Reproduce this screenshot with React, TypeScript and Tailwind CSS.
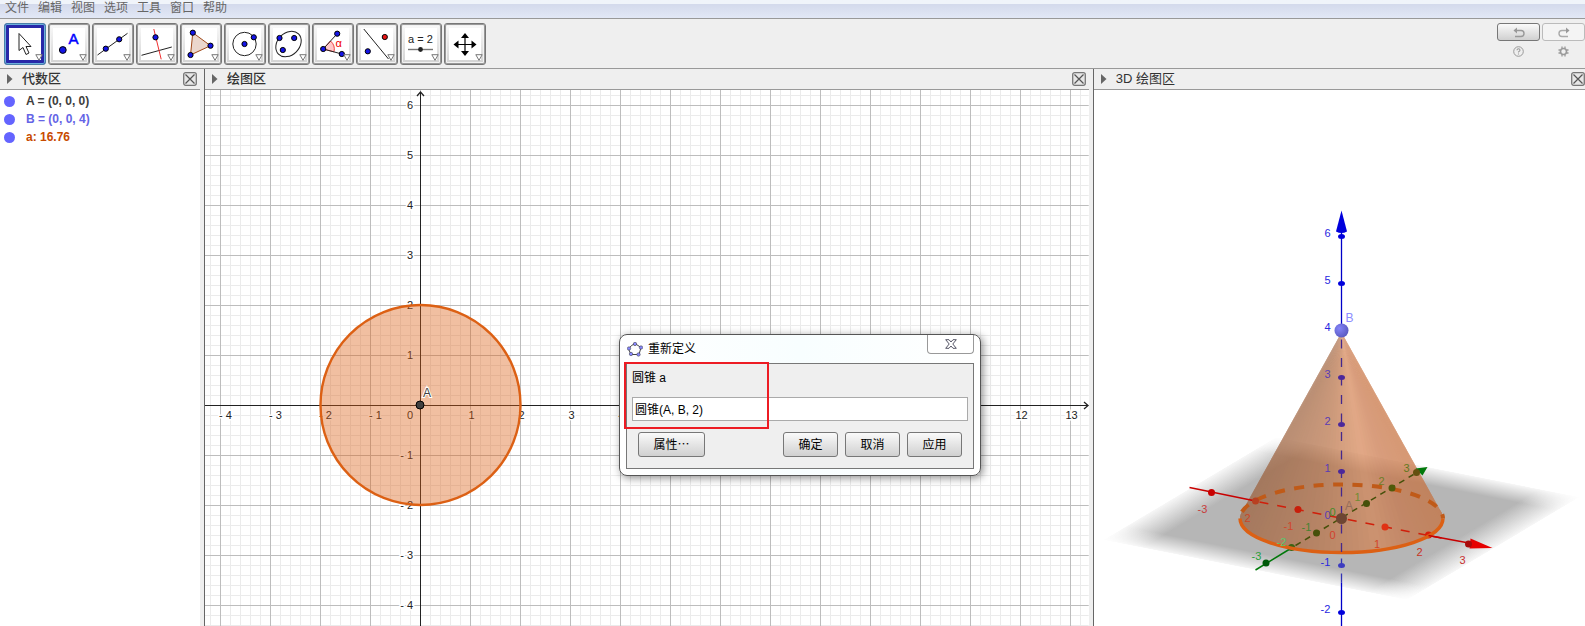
import type { ReactNode } from "react";
import clsx from "clsx";

const menus = ["文件", "编辑", "视图", "选项", "工具", "窗口", "帮助"];

const objects = [
  { text: "A = (0, 0, 0)", color: "text-[#404040]" },
  { text: "B = (0, 0, 4)", color: "text-[#6464e6]" },
  { text: "a: 16.76", color: "text-[#c84b00]" },
];

const Dot = ({ x, y, fill = "#1414e6", r = 2.6 }: { x: number; y: number; fill?: string; r?: number }) => (
  <circle cx={x} cy={y} r={r} fill={fill} stroke="#000" />
);

const tools: { name: string; icon: ReactNode }[] = [
  {
    name: "移动",
    icon: <path d="M9.5 4.5V21.5L13.5 18.5L16.5 25.5L19.5 24L16.5 17.5H21.5Z" fill="#fff" stroke="#222" />,
  },
  {
    name: "点",
    icon: (
      <>
        <Dot x={9.3} y={21} r={3.4} />
        <text x="15" y="15" fontSize="15" fill="#0000ff" stroke="#0000ff" strokeWidth="0.5">A</text>
      </>
    ),
  },
  {
    name: "直线",
    icon: (
      <>
        <path d="M0 26L30 4.3" stroke="#222" />
        <Dot x={8.3} y={19.7} />
        <Dot x={21.7} y={10.3} />
      </>
    ),
  },
  {
    name: "垂线",
    icon: (
      <>
        <path d="M0 26.3L30.3 18" stroke="#222" />
        <path d="M12.3 0L19.7 30.3" stroke="#f03030" />
        <Dot x={14} y={8.3} />
      </>
    ),
  },
  {
    name: "多边形",
    icon: (
      <>
        <path d="M7.3 3.7L25 16.7L5 26Z" fill="#ebd6cc" stroke="#a04818" />
        <Dot x={7.3} y={3.7} />
        <Dot x={25} y={16.7} />
        <Dot x={5} y={26} />
      </>
    ),
  },
  {
    name: "圆",
    icon: (
      <>
        <circle cx="15" cy="15" r="11.7" stroke="#222" />
        <Dot x={15} y={15} />
        <Dot x={24.3} y={8.3} />
      </>
    ),
  },
  {
    name: "椭圆",
    icon: (
      <>
        <ellipse cx="15" cy="15" rx="14.2" ry="11" transform="rotate(-45 15 15)" stroke="#222" />
        <Dot x={6} y={9} />
        <Dot x={20.7} y={9} />
        <Dot x={9.3} y={21} />
      </>
    ),
  },
  {
    name: "角度",
    icon: (
      <>
        <path d="M5.7 20L13 12A11 11 0 0 1 16.5 22.8Z" fill="#ffc8c8" stroke="#f04040" />
        <path d="M19.7 4.7L5.7 20L24.3 25" stroke="#222" />
        <text x="18" y="18" fontSize="11" fill="#f00000">α</text>
        <Dot x={5.7} y={20} />
        <Dot x={19.7} y={4.7} />
        <Dot x={24.3} y={25} />
      </>
    ),
  },
  {
    name: "轴对称",
    icon: (
      <>
        <path d="M2.3 0L27 30" stroke="#222" />
        <Dot x={23.3} y={8} fill="#e61414" />
        <Dot x={6.3} y={22.3} />
      </>
    ),
  },
  {
    name: "滑动条",
    icon: (
      <>
        <text x="15" y="14" fontSize="11" fill="#222" textAnchor="middle">a = 2</text>
        <path d="M2.5 20.5H27.5" stroke="#777" strokeWidth="1.4" />
        <circle cx="15" cy="20.5" r="2.4" fill="#222" />
      </>
    ),
  },
  {
    name: "移动视图",
    icon: (
      <>
        <path d="M15.5 6V25M6 15.5H25" stroke="#000" strokeWidth="1.2" />
        <path
          d="M15.5 4L19.5 9H11.5ZM15.5 27L19.5 22H11.5ZM4 15.5L9 11.5V19.5ZM27 15.5L22 11.5V19.5Z"
          fill="#000"
        />
      </>
    ),
  },
];

const range = (from: number, to: number) => Array.from({ length: to - from + 1 }, (_, i) => from + i);

const label = (n: number) => (n < 0 ? `- ${-n}` : `${n}`);

const PanelHeader = ({ title, light, flush }: { title: string; light?: boolean; flush?: boolean }) => (
  <header
    className={clsx(
      "flex h-[21px] shrink-0 items-center border-b border-[#999] bg-[#efefef] pl-[7px] text-[#333]",
      flush ? "pr-0" : "pr-[3px]"
    )}
  >
    <svg width="6" height="10" viewBox="0 0 6 10" aria-hidden="true">
      <path d="M0 0L5.5 5L0 10Z" fill="#666" />
    </svg>
    <h2 className={clsx("ml-[9px] flex-1 text-[13px] leading-5", light ? "font-normal" : "font-medium")}>{title}</h2>
    <button aria-label="关闭">
      <svg width="14" height="14" viewBox="0 0 14 14" fill="none">
        <rect x="0.7" y="0.7" width="12.6" height="12.6" rx="2" fill="#e6e6e6" stroke="#777" strokeWidth="1.3" />
        <path d="M2.5 2.5L11.5 11.5M11.5 2.5L2.5 11.5" stroke="#555" strokeWidth="1.2" />
      </svg>
    </button>
  </header>
);

const Toolbar = () => (
  <div className="flex h-[50px] shrink-0 items-start justify-between border-b border-[#999] bg-[#efefef] pl-1 pt-1">
    <div className="flex gap-[2px]">
      {tools.map((tool, i) => (
        <button
          key={tool.name}
          aria-label={tool.name}
          className={clsx(
            "relative flex size-[42px] items-center justify-center rounded-[3px] border",
            i === 0
              ? "border-[#4a7fa8] bg-[#2828a8] shadow-[inset_0_0_0_1px_#6cb0dc]"
              : "border-[#777] bg-linear-to-b from-[#fafafa] to-[#d2d2d2] shadow-[inset_0_0_0_1px_#999,inset_0_0_0_2px_#f2f2f2]"
          )}
        >
          <svg width="32" height="32" viewBox="-0.5 -1 32 32" fill="none" className="bg-white">
            {tool.icon}
          </svg>
          <svg width="8" height="7" viewBox="0 0 8 7" className="absolute bottom-[3px] right-[2px]">
            <path d="M0.8 0.7H7.2L4 6.3Z" fill="#fff" stroke="#777" />
          </svg>
        </button>
      ))}
    </div>
    <div className="grid grid-cols-2 gap-x-[2px] gap-y-[2px] text-[#999]">
      <button
        aria-label="撤销"
        className="flex h-[18px] w-[43px] items-center justify-center rounded-[3px] border border-[#777] bg-linear-to-b from-[#fafafa] to-[#d0d0d0]"
      >
        <svg width="12" height="11" viewBox="0 0 12 11" fill="none">
          <path d="M2 3.5H8A3 3 0 0 1 8 9.5H2" stroke="#999" strokeWidth="1.4" />
          <path d="M0.5 3.5L4 0.5V6.5Z" fill="#999" />
        </svg>
      </button>
      <button
        aria-label="重做"
        className="flex h-[18px] w-[43px] items-center justify-center rounded-[3px] border border-[#bbb] bg-[#f4f4f4]"
      >
        <svg width="12" height="11" viewBox="0 0 12 11" fill="none">
          <path d="M10 3.5H4A3 3 0 0 0 4 9.5H10" stroke="#aaa" strokeWidth="1.4" />
          <path d="M11.5 3.5L8 0.5V6.5Z" fill="#999" />
        </svg>
      </button>
      <button aria-label="帮助" className="flex h-4 items-center justify-center">
        <svg width="11" height="11" viewBox="0 0 11 11" fill="none">
          <circle cx="5.5" cy="5.5" r="4.8" stroke="#999" />
          <path d="M4 4.2Q4 2.7 5.5 2.7T7 4.2Q7 5 5.5 5.9V6.5M5.5 7.5V8.6" stroke="#999" strokeWidth="1.1" />
        </svg>
      </button>
      <button aria-label="设置" className="flex h-4 items-center justify-center">
        <svg width="11" height="11" viewBox="0 0 11 11" fill="none" stroke="#999">
          <circle cx="5.5" cy="5.5" r="3" strokeWidth="1.6" />
          <path
            d="M4 0.5V2.5M7 0.5V2.5M4 8.5V10.5M7 8.5V10.5M0.5 4H2.5M0.5 7H2.5M8.5 4H10.5M8.5 7H10.5"
            strokeWidth="1.3"
          />
        </svg>
      </button>
    </div>
  </div>
);

// 50px per unit, one minor line every 0.2
const Graph = () => (
  <svg className="min-w-0 flex-1 bg-white" fontSize="11" role="img" aria-label="绘图区">
    <defs>
      <pattern id="minor" width="10" height="10" patternUnits="userSpaceOnUse" x="215" y="315">
        <path d="M0.5 0V10M0 0.5H10" stroke="#ebebeb" fill="none" />
      </pattern>
      <pattern id="major" width="50" height="50" patternUnits="userSpaceOnUse" x="215" y="315">
        <path d="M0.5 0V50M0 0.5H50" stroke="#bdbdbd" fill="none" />
      </pattern>
    </defs>
    <rect width="100%" height="100%" fill="url(#minor)" />
    <rect width="100%" height="100%" fill="url(#major)" />
    <path d="M215.5 3V900M0 315.5H883" stroke="#222" />
    <path d="M212 6L215.5 2L219 6M879 312L883 315.5L879 319" stroke="#222" fill="none" strokeWidth="1.3" />
    <g fill="#222" stroke="#fff" strokeWidth="3" paintOrder="stroke">
      {range(-4, 13).filter((n) => n !== 0).map((n) => (
        <text key={n} x={215.5 + n * 50 + (n < 0 ? 5 : 1)} y="329" textAnchor="middle">{label(n)}</text>
      ))}
      {range(-4, 6).filter((n) => n !== 0).map((n) => (
        <text key={n} x="208" y={319 - n * 50} textAnchor="end">{label(n)}</text>
      ))}
      <text x="208" y="329" textAnchor="end">0</text>
    </g>
    <circle cx="215.5" cy="315" r="100" fill="#dc6014" fillOpacity="0.4" stroke="#dc6014" strokeWidth="2.4" />
    <circle cx="215" cy="315" r="4" fill="#404040" stroke="#000" />
    <text x="218" y="307" fontSize="12" fill="#404040" stroke="#fff" strokeWidth="2" paintOrder="stroke">A</text>
  </svg>
);

const RX = 101.5;
const RY = 34;
const APEX = -186;

// shade of the cone wall, t runs from the left edge (0) to the right edge (1)
const shades = [
  [0, 156, 95, 58],
  [0.4, 184, 112, 68],
  [0.66, 214, 132, 84],
  [0.8, 200, 116, 70],
  [1, 198, 110, 58],
];

const shade = (t: number) => {
  const i = Math.max(1, shades.findIndex((s) => s[0] >= t));
  const [a, b] = [shades[i - 1], shades[i]];
  const k = (t - a[0]) / (b[0] - a[0]);
  return `rgb(${[1, 2, 3].map((c) => Math.round(a[c] + (b[c] - a[c]) * k)).join(",")})`;
};

const FACETS = 60;

const rim = (i: number) => {
  const angle = Math.PI + 0.183 - (i / FACETS) * (Math.PI + 0.366);
  return `${(RX * Math.cos(angle)).toFixed(2)} ${(RY * Math.sin(angle)).toFixed(2)}`;
};

// each facet reaches under the next one so that no seam shows
const facets = range(0, FACETS - 1).map((i) => ({
  d: `M0 ${APEX}L${rim(i)}L${rim(Math.min(i + 2, FACETS))}Z`,
  fill: shade((1 - Math.cos((Math.PI * (i + 0.5)) / FACETS)) / 2),
}));

const redTicks = [
  [-130, -26, "#c80000"], [-86, -17.5, "#b84020"], [-43.5, -9, "#c81e0a"],
  [43.5, 8.5, "#e03214"], [87, 16.5, "#d81e0a"], [127, 25.5, "#a80a0a"],
] as const;

const greenTicks = [
  [-75.5, 44.5, "#005a0a"], [-50, 29, "#3c6414"], [-25, 14.5, "#46500a"],
  [25, -15, "#46500a"], [50.5, -30.5, "#505a0a"], [75, -46, "#64500f"],
] as const;

const marks = [
  [-139, -6, "-3", "#c83c3c"], [-94, 3, "2", "#c84628"], [-53, 11, "-1", "#d2462d"], [-9, 20, "0", "#d2412d"],
  [35.5, 29, "1", "#d24628"], [78, 37, "2", "#c8321e"], [121, 45, "3", "#c83232"],
  [-85, 41, "-3", "#28a03c"], [-60, 27, "-2", "#5ac86e"], [-35, 12, "-1", "#468232"], [-9, -3, "0", "#468c28"],
  [16, -18, "1", "#6e8c32"], [40, -34, "2", "#6e7d28"], [65, -47, "3", "#64781e"],
] as const;

const Scene = () => (
  <svg className="min-w-0 flex-1 bg-white" fontSize="11" textAnchor="middle" fill="none" role="img" aria-label="3D 绘图区">
    <defs>
      <linearGradient id="fadeU" x1="0" x2="1" y1="0" y2="0">
        <stop offset="0" stopColor="#b6b6b6" stopOpacity="0.1" />
        <stop offset="0.13" stopColor="#b6b6b6" />
        <stop offset="0.87" stopColor="#b6b6b6" />
        <stop offset="1" stopColor="#b6b6b6" stopOpacity="0.1" />
      </linearGradient>
      <linearGradient id="fadeV" x1="0" x2="0" y1="0" y2="1">
        <stop offset="0" stopColor="#fff" stopOpacity="0.1" />
        <stop offset="0.13" stopColor="#fff" />
        <stop offset="0.87" stopColor="#fff" />
        <stop offset="1" stopColor="#fff" stopOpacity="0.1" />
      </linearGradient>
      <mask id="fade" maskUnits="userSpaceOnUse" x="0" y="0" width="100" height="100">
        <rect width="100" height="100" fill="url(#fadeV)" />
      </mask>
      <radialGradient id="ball" cx="0.35" cy="0.35" r="0.7">
        <stop offset="0" stopColor="#8484f8" />
        <stop offset="1" stopColor="#5a5ac0" />
      </radialGradient>
    </defs>
    <g transform="translate(247.5 428.5)">
      <g transform="matrix(3.04 0.6 1.73 -1.03 -238.5 21.5)">
        <rect width="100" height="100" fill="url(#fadeU)" mask="url(#fade)" />
      </g>

      <g opacity="0.7">
        <ellipse rx={RX} ry={RY} fill="#c87646" />
        {facets.map((f) => (
          <path key={f.d} d={f.d} fill={f.fill} />
        ))}
      </g>
      <path d={`M${-RX} 0A${RX} ${RY} 0 0 1 ${RX} 0`} stroke="#c05a18" strokeWidth="4" strokeDasharray="10 9.5" strokeDashoffset="-7" />

      <path d="M-152 -31L-86 -17.5" stroke="#c80000" strokeWidth="1.5" />
      <path d="M-82 -16.5L87 17" stroke="#d01e0a" strokeWidth="1.5" strokeDasharray="9 9" />
      <path d="M87 17L130 25" stroke="#c80000" strokeWidth="1.5" />
      <path d="M129 20L151 29.5L128 30Z" fill="#e60000" />
      <path d="M-86 51.5L-50 29.5" stroke="#00780a" strokeWidth="1.5" />
      <path d="M-46 27L72 -44" stroke="#46500a" strokeWidth="1.5" strokeDasharray="6 5" />
      <path d="M74 -50L86 -51.5L81 -43Z" fill="#00780a" />
      {[...redTicks, ...greenTicks].map(([x, y, c]) => (
        <circle key={`${x}`} cx={x} cy={y} r="3.5" fill={c} />
      ))}

      <path d={`M${-RX} 0A${RX} ${RY} 0 0 0 ${RX} 0`} stroke="#dc6014" strokeWidth="3.4" />
      <path d="M87 17L100 19.5" stroke="#c80000" strokeWidth="1.5" />

      <path d="M0 -290V-193" stroke="#0000c8" strokeWidth="1.3" />
      <path d="M0 -179V34" stroke="#46288c" strokeWidth="1.3" strokeDasharray="9 9.5" />
      <path d="M0 40V64" stroke="#3232b4" strokeWidth="1.3" strokeDasharray="9 6" />
      <path d="M0 64V900" stroke="#0000c8" strokeWidth="1.3" />
      <path d="M0 -308L5.5 -287Q0 -284 -5.5 -287Z" fill="#0000dc" />
      {range(-2, 6).filter((n) => n !== 0 && n !== 4).map((n) => (
        <ellipse
          key={n}
          cy={-n * 47}
          rx="3.5"
          ry="2.5"
          fill={n > 0 && n < 4 ? "#4b289b" : n === -1 ? "#3c3cc0" : "#0000dc"}
        />
      ))}
      {range(-2, 6).map((n) => (
        <text key={n} x={n < 0 ? -16 : -14} y={-n * 47} fill={n >= 0 && n < 4 ? "#5a3cb4" : "#2828e0"}>{n}</text>
      ))}
      {marks.map(([x, y, t, c]) => (
        <text key={`${x} ${y}`} x={x} y={y} fill={c}>{t}</text>
      ))}
      <circle r="5.5" fill="#6e4632" />
      <text x="7.5" y="-9" fontSize="12" fill="#966e5a">A</text>
      <circle cy="-188" r="7" fill="url(#ball)" />
      <text x="8" y="-197" fontSize="12" fill="#8c8cff">B</text>
    </g>
  </svg>
);

const DialogButton = ({ children, wide }: { children: ReactNode; wide?: boolean }) => (
  <button
    type="button"
    className={clsx(
      "h-[25px] rounded-[3px] border border-[#777] bg-linear-to-b from-[#fafafa] to-[#d0d0d0] text-xs text-black",
      wide ? "w-[67px]" : "w-[55px]"
    )}
  >
    {children}
  </button>
);

const RedefineDialog = () => (
  <form
    role="dialog"
    aria-label="重新定义"
    className="absolute left-[414px] top-[265px] w-[362px] rounded-lg border border-[#555] bg-linear-to-r from-white via-[#f8feff] to-white px-[6px] pb-[6px] text-black shadow-[2px_2px_8px_rgba(0,0,0,0.45)]"
  >
    <div className="flex h-7 items-start">
      <svg width="16" height="15" viewBox="0 0 16 15" fill="none" className="ml-px mt-[7px]">
        <path d="M8 1.5L14 5.5L12 12.5H4L1.5 7Q4 3 8 1.5Z" stroke="#444" />
        {[[8, 2], [14, 5.5], [11.5, 12.5], [4, 12], [2, 6.5]].map(([x, y]) => (
          <circle key={x} cx={x} cy={y} r="1.7" fill="#8888ff" stroke="#445" strokeWidth="0.6" />
        ))}
      </svg>
      <h3 className="ml-[5px] mt-[5px] flex-1 text-xs leading-[18px]">重新定义</h3>
      <button
        type="button"
        aria-label="关闭"
        className="flex h-[19px] w-[47px] items-center justify-center rounded-b-[4px] border border-t-0 border-[#999] bg-white"
      >
        <svg width="12" height="10" viewBox="0 0 12 10">
          <path
            d="M0.7 0.7H4L6 3L8 0.7H11.3L7.8 5L11.3 9.3H8L6 7L4 9.3H0.7L4.2 5Z"
            fill="#fff"
            stroke="#556"
          />
        </svg>
      </button>
    </div>
    <div className="border border-[#777] bg-[#efefef] px-[5px] pb-[11px]">
      <label htmlFor="definition" className="block h-[33px] pt-[5px] text-xs leading-[18px]">圆锥 a</label>
      <input
        id="definition"
        defaultValue="圆锥(A, B, 2)"
        className="block h-6 w-full border border-[#aaa] bg-white px-[2px] pb-[2px] text-xs outline-none"
      />
      <div className="mt-[11px] flex gap-[7px] px-[6px]">
        <DialogButton wide>属性⋯</DialogButton>
        <span className="flex-1" />
        <DialogButton>确定</DialogButton>
        <DialogButton>取消</DialogButton>
        <DialogButton>应用</DialogButton>
      </div>
    </div>
    <div className="pointer-events-none absolute left-[4px] top-[27px] h-[67px] w-[145px] border-2 border-[#ed1c24]" />
  </form>
);

const App = () => {
  return (
    <div className="flex h-screen flex-col overflow-hidden bg-[#efefef] font-['Liberation_Sans','Noto_Sans_CJK_SC',sans-serif]">
      <nav className="flex h-[19px] shrink-0 items-center gap-[9px] border-b border-[#999] bg-linear-to-b from-[#f0f4fa] from-20% via-[#d4daec] via-25% to-[#e2e8f6] pb-[3px] pl-[5px]">
        {menus.map((m) => (
          <button key={m} className="text-xs leading-[14px] text-[#666]">{m}</button>
        ))}
      </nav>
      <Toolbar />
      <main className="flex min-h-0 flex-1">
        <aside className="flex w-[205px] shrink-0 flex-col border-r border-[#666] pr-1">
          <PanelHeader title="代数区" />
          <ul className="flex-1 bg-white pl-1 pt-[2px]">
            {objects.map((o) => (
              <li key={o.text} className={clsx("flex h-[18px] items-center gap-[11px] text-xs font-bold", o.color)}>
                <span className="size-[11px] rounded-full bg-[#6464ff]" />
                {o.text}
              </li>
            ))}
          </ul>
        </aside>
        <section className="relative flex min-w-0 flex-1 flex-col border-r border-[#666] pr-1">
          <PanelHeader title="绘图区" />
          <div className="flex min-h-0 flex-1">
            <Graph />
          </div>
          <RedefineDialog />
        </section>
        <section className="flex w-[31%] shrink-0 flex-col">
          <PanelHeader title="3D 绘图区" light flush />
          <div className="flex min-h-0 flex-1">
            <Scene />
          </div>
        </section>
      </main>
    </div>
  );
};

export default App;
